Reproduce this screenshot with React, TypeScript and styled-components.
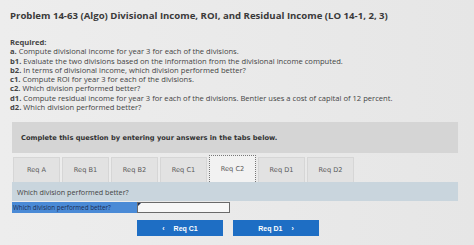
import React from "react";
import styled, { createGlobalStyle } from "styled-components";

const Global = createGlobalStyle`
  html, body { margin: 0; padding: 0; }
  body {
    width: 474px;
    height: 245px;
    overflow: hidden;
    background: #eaeaea;
    font-family: "Open Sans", "Liberation Sans", sans-serif;
    color: #333;
  }
`;

const Page = styled.div`
  box-sizing: border-box;
  width: 474px;
  height: 245px;
  padding: 10px 16px 0 10px;
  background: linear-gradient(90deg, #ededed 0%, #e9e9e9 60%, #e6e6e6 100%);
`;

const Title = styled.h1`
  margin: 0;
  font-size: 9.6px;
  font-weight: 700;
  color: #3a3a3a;
  line-height: 12px;
  white-space: nowrap;
`;

const Required = styled.div`
  margin-top: 16px;
  font-size: 7.6px;
  line-height: 9.3px;
  color: #444;
  white-space: nowrap;
`;

const ReqHead = styled.div`
  font-weight: 700;
`;

const Item = styled.div`
  b { font-weight: 700; }
`;

const Section = styled.div`
  margin-top: 10px;
  margin-left: 2px;
  width: 446px;
`;

const Banner = styled.div`
  background: #d5d5d5;
  height: 31px;
  display: flex;
  align-items: center;
  padding-left: 9px;
  font-family: "DejaVu Sans", Verdana, sans-serif;
  font-size: 6.7px;
  font-weight: 700;
  color: #333;
`;

const Tabs = styled.div`
  display: flex;
  gap: 2px;
  margin-top: 2px;
  padding-left: 1px;
  align-items: flex-end;
`;

const Tab = styled.div<{ $active?: boolean }>`
  box-sizing: border-box;
  width: 47px;
  height: ${(p) => (p.$active ? "27px" : "25px")};
  display: flex;
  align-items: center;
  justify-content: center;
  font-family: "DejaVu Sans", Verdana, sans-serif;
  font-size: 6.6px;
  color: #5a5a5a;
  background: ${(p) => (p.$active ? "#f2f2f2" : "#e2e2e2")};
  border: ${(p) => (p.$active ? "1px dotted #777" : "1px solid #d6d6d6")};
  border-bottom: none;
`;

const Prompt = styled.div`
  height: 19px;
  background: #c9d5dd;
  display: flex;
  align-items: center;
  padding-left: 5px;
  font-size: 7.2px;
  color: #444;
`;

const AnswerRow = styled.div`
  display: flex;
  margin-top: 1px;
  height: 11px;
`;

const AnswerLabel = styled.div`
  width: 125px;
  background: #4a8ad6;
  color: #1d2f55;
  font-size: 6.3px;
  display: flex;
  align-items: center;
  padding-left: 1px;
  box-sizing: border-box;
  white-space: nowrap;
`;

const AnswerInput = styled.div`
  position: relative;
  width: 93px;
  box-sizing: border-box;
  background: #f7f7f7;
  border: 1px solid #6a6a6a;
`;

const Marker = styled.span`
  position: absolute;
  left: 0;
  top: 0;
  width: 0;
  height: 0;
  border-top: 3px solid #1d2f55;
  border-right: 3px solid transparent;
`;

const Nav = styled.div`
  display: flex;
  gap: 10px;
  margin-top: 7px;
  padding-left: 125px;
`;

const NavButton = styled.div`
  width: 86px;
  height: 16px;
  background: #1e6ec4;
  color: #fff;
  font-family: "Liberation Sans", Arial, sans-serif;
  font-weight: 700;
  font-size: 7px;
  display: flex;
  align-items: center;
  justify-content: center;
  gap: 9px;
`;

const tabs = ["Req A", "Req B1", "Req B2", "Req C1", "Req C2", "Req D1", "Req D2"];

export default function App() {
  return (
    <>
      <Global />
      <Page>
        <Title>Problem 14-63 (Algo) Divisional Income, ROI, and Residual Income (LO 14-1, 2, 3)</Title>
        <Required>
          <ReqHead>Required:</ReqHead>
          <Item><b>a.</b> Compute divisional income for year 3 for each of the divisions.</Item>
          <Item><b>b1.</b> Evaluate the two divisions based on the information from the divisional income computed.</Item>
          <Item><b>b2.</b> In terms of divisional income, which division performed better?</Item>
          <Item><b>c1.</b> Compute ROI for year 3 for each of the divisions.</Item>
          <Item><b>c2.</b> Which division performed better?</Item>
          <Item><b>d1.</b> Compute residual income for year 3 for each of the divisions. Bentler uses a cost of capital of 12 percent.</Item>
          <Item><b>d2.</b> Which division performed better?</Item>
        </Required>
        <Section>
          <Banner>Complete this question by entering your answers in the tabs below.</Banner>
          <Tabs>
            {tabs.map((t) => (
              <Tab key={t} $active={t === "Req C2"}>{t}</Tab>
            ))}
          </Tabs>
          <Prompt>Which division performed better?</Prompt>
          <AnswerRow>
            <AnswerLabel>Which division performed better?</AnswerLabel>
            <AnswerInput><Marker /></AnswerInput>
          </AnswerRow>
          <Nav>
            <NavButton><span>‹</span><span>Req C1</span></NavButton>
            <NavButton><span>Req D1</span><span>›</span></NavButton>
          </Nav>
        </Section>
      </Page>
    </>
  );
}
